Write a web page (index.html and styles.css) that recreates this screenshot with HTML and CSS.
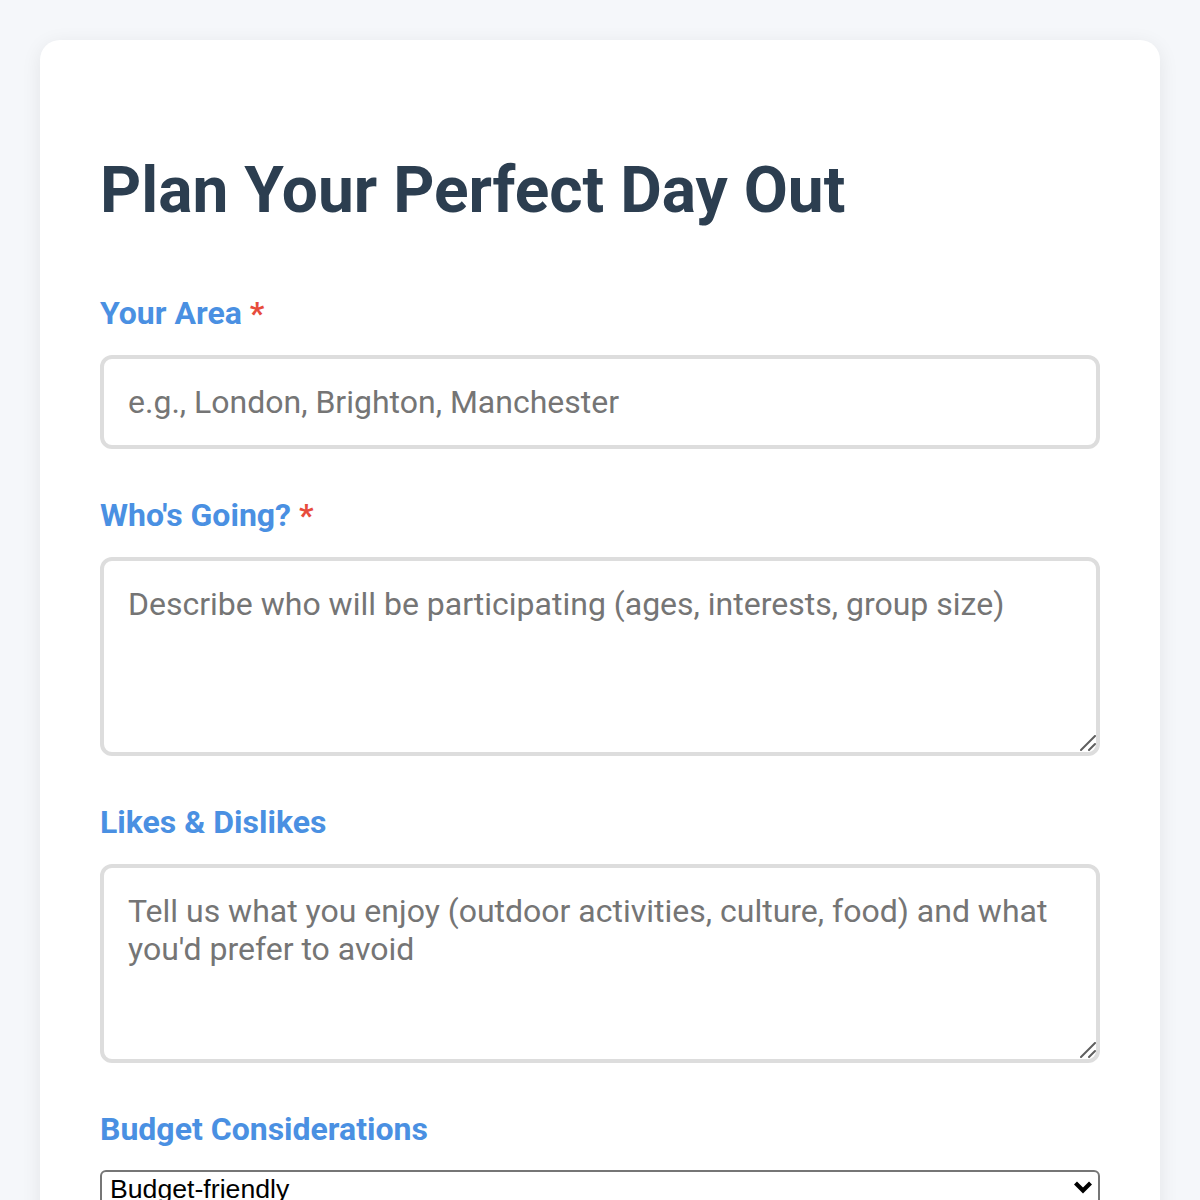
FILE: index.html
```html
<!DOCTYPE html>
<html lang="en">
<head>
<meta charset="utf-8">
<title>Plan Your Perfect Day Out</title>
<link rel="stylesheet" href="styles.css">
</head>
<body>
<div class="card">
  <h1 class="title">Plan Your Perfect Day Out</h1>
  <form class="form">
    <div class="group">
      <label class="label" for="area">Your Area <span class="req">*</span></label>
      <input class="field" id="area" type="text" placeholder="e.g., London, Brighton, Manchester">
    </div>
    <div class="group">
      <label class="label" for="who">Who's Going? <span class="req">*</span></label>
      <div class="wrap">
        <textarea class="field area" id="who" placeholder="Describe who will be participating (ages, interests, group size)"></textarea>
        <svg class="grip" width="16" height="16" viewBox="0 0 16 16" aria-hidden="true"><path d="M1 15 L15 1 M9 15 L15 9" stroke="#5f5f5f" stroke-width="2" stroke-linecap="round" fill="none"/></svg>
      </div>
    </div>
    <div class="group">
      <label class="label" for="likes">Likes &amp; Dislikes</label>
      <div class="wrap">
        <textarea class="field area" id="likes" placeholder="Tell us what you enjoy (outdoor activities, culture, food) and what you'd prefer to avoid"></textarea>
        <svg class="grip" width="16" height="16" viewBox="0 0 16 16" aria-hidden="true"><path d="M1 15 L15 1 M9 15 L15 9" stroke="#5f5f5f" stroke-width="2" stroke-linecap="round" fill="none"/></svg>
      </div>
    </div>
    <div class="group">
      <label class="label label-select" for="budget">Budget Considerations</label>
      <div class="wrap">
        <select class="select" id="budget">
          <option>Budget-friendly</option>
          <option>Moderate</option>
          <option>Splurge</option>
        </select>
        <svg class="chevron" width="20" height="14" viewBox="0 0 20 14" aria-hidden="true"><path d="M2.5 3 L10 10.5 L17.5 3" stroke="#000000" stroke-width="4.2" fill="none"/></svg>
      </div>
    </div>
  </form>
</div>
</body>
</html>
```
FILE: styles.css
```css
html, body {
  margin: 0;
  padding: 0;
}
body {
  background: #f5f7fa;
  font-family: Roboto, "Noto Sans", Arial, sans-serif;
  padding: 40px;
}
.card {
  background: #ffffff;
  border-radius: 20px;
  padding: 60px;
  box-shadow: 0 4px 20px rgba(0, 0, 0, 0.08);
}
.title {
  margin: 53px 0 66px;
  font-size: 64px;
  font-weight: 700;
  color: #2c3e50;
  line-height: normal;
}
.form {
  display: flex;
  flex-direction: column;
  gap: 47px;
}
.group {
  display: flex;
  flex-direction: column;
}
.label {
  font-size: 32px;
  font-weight: 700;
  color: #4a90e2;
  margin-bottom: 23px;
  line-height: normal;
}
.label-select {
  margin-bottom: 22px;
}
.req {
  color: #e74c3c;
}
.wrap {
  position: relative;
}
.field {
  display: block;
  width: 100%;
  box-sizing: border-box;
  border: 4px solid #dddddd;
  border-radius: 12px;
  padding: 24px;
  font-family: Roboto, "Noto Sans", Arial, sans-serif;
  font-size: 32px;
  color: #333333;
  background: #ffffff;
  margin: 0;
}
.field::placeholder {
  color: #757575;
}
.area {
  height: 199px;
  resize: none;
}
.grip {
  position: absolute;
  right: 4px;
  bottom: 5px;
  pointer-events: none;
}
.select {
  display: block;
  width: 100%;
  box-sizing: border-box;
  appearance: none;
  -webkit-appearance: none;
  background: #ffffff;
  color: #000000;
  border: 2px solid #767676;
  border-radius: 6px;
  padding: 2px 56px 4px 8px;
  font-size: 26.67px;
  margin: 0;
}
.chevron {
  position: absolute;
  right: 7px;
  top: 10px;
  pointer-events: none;
}
```
